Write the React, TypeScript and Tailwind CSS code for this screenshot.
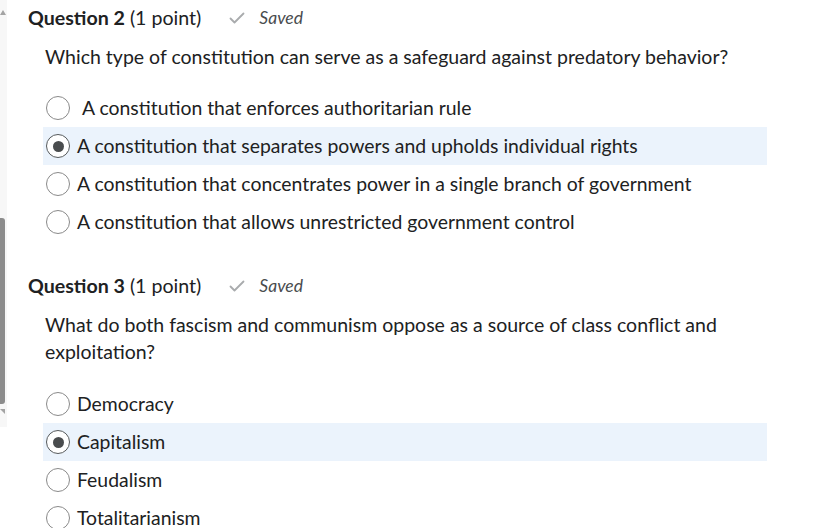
import React from 'react';

interface Question {
  num: number;
  text: string;
  options: string[];
  selected: number;
  firstGap?: boolean;
}

const questions: Question[] = [
  {
    num: 2,
    text: 'Which type of constitution can serve as a safeguard against predatory behavior?',
    options: [
      'A constitution that enforces authoritarian rule',
      'A constitution that separates powers and upholds individual rights',
      'A constitution that concentrates power in a single branch of government',
      'A constitution that allows unrestricted government control',
    ],
    selected: 1,
    firstGap: true,
  },
  {
    num: 3,
    text: 'What do both fascism and communism oppose as a source of class conflict and exploitation?',
    options: ['Democracy', 'Capitalism', 'Feudalism', 'Totalitarianism'],
    selected: 1,
  },
];

const Radio = ({ checked }: { checked: boolean }) => (
  <span
    className={
      'flex h-6 w-6 shrink-0 items-center justify-center rounded-full border bg-white ' +
      (checked ? 'border-[#565a5c]' : 'border-[#8a8a8a]')
    }
  >
    {checked && <span className="h-[11px] w-[11px] rounded-full bg-[#494c4e]" />}
  </span>
);

const Scrollbar = () => (
  <div className="flex h-[427px] w-[7px] shrink-0 flex-col items-start bg-[#f7f7f7]">
    <div className="mt-[10px] h-0 w-0 border-b-[5px] border-l-[3px] border-r-[3px] border-b-[#a3a3a3] border-l-transparent border-r-transparent" />
    <div className="mt-[203px] h-[186px] w-[5px] rounded-r-[3px] bg-[#8c8c8c]" />
    <div className="mt-[5px] h-0 w-0 border-l-[5px] border-t-[5px] border-l-transparent border-t-[#a3a3a3]" />
  </div>
);

const QuestionBlock = ({ q, first }: { q: Question; first: boolean }) => (
  <section className={first ? 'pt-[6px]' : 'pt-[33px]'}>
    <div className="flex items-center pl-[21px] text-[19.6px] leading-6 text-[#202122]">
      <span className="font-bold">Question {q.num}</span>
      <span className="ml-[5px]">(1 point)</span>
      <svg className="ml-[28px]" width="16" height="12" viewBox="0 0 16 12" fill="none">
        <path d="M1.5 6.5 L5.5 10.5 L14.5 1.5" stroke="#a9abad" strokeWidth="1.8" strokeLinecap="round" strokeLinejoin="round" />
      </svg>
      <span className="ml-[14px] text-[17.5px] italic text-[#494c4e]">Saved</span>
    </div>
    <p className="mt-[13px] w-[724px] pl-[38px] text-[19.5px] leading-[27px] text-[#202122]">{q.text}</p>
    <div className={q.num === 2 ? 'mt-[19px]' : 'mt-[20px]'}>
      {q.options.map((opt, i) => (
        <div
          key={opt}
          className={
            'ml-[36px] flex h-[38px] w-[724px] items-center pl-[3px] text-[19.4px] text-[#202122] ' +
            (i === q.selected ? 'bg-[#ebf3fc]' : '')
          }
        >
          <Radio checked={i === q.selected} />
          <span className={q.firstGap && i === 0 ? 'ml-[12px]' : 'ml-[7px]'}>{opt}</span>
        </div>
      ))}
    </div>
  </section>
);

export default function App() {
  return (
    <div
      className="flex h-[528px] w-[830px] overflow-hidden bg-white"
      style={{ fontFamily: 'Lato, "Noto Sans", sans-serif' }}
    >
      <Scrollbar />
      <div className="flex-1">
        {questions.map((q, i) => (
          <QuestionBlock key={q.num} q={q} first={i === 0} />
        ))}
      </div>
    </div>
  );
}
